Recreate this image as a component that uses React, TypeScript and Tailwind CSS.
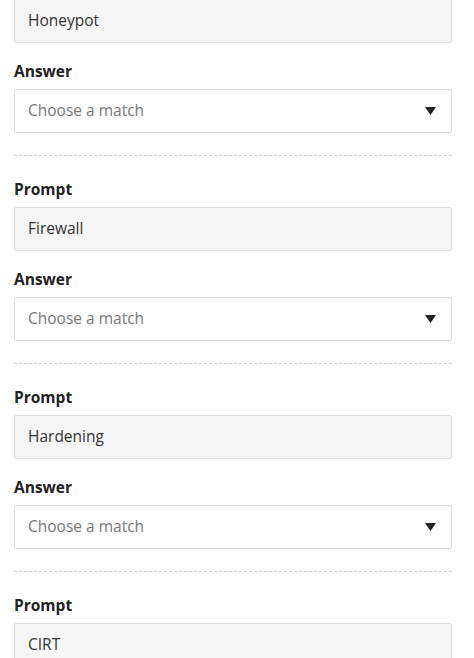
const items = [
  { prompt: "Honeypot", hidePrompt: true },
  { prompt: "Firewall" },
  { prompt: "Hardening" },
  { prompt: "CIRT" },
];

function Caret() {
  return (
    <svg width="11" height="8" viewBox="0 0 11 8" className="shrink-0">
      <path d="M0 0 H11 L5.5 8 Z" fill="#222" />
    </svg>
  );
}

export default function App() {
  return (
    <div
      className="h-[658px] overflow-hidden bg-white pl-[14px] pr-[22px]"
      style={{ fontFamily: '"Open Sans", "Liberation Sans", sans-serif' }}
    >
      {items.map((item, i) => (
        <div
          key={item.prompt}
          className={i === 0 ? "-mt-px pb-[22px]" : "border-t border-dashed border-[#cfcfcf] pt-[23px] pb-[22px]"}
        >
          {!item.hidePrompt && (
            <p className="mb-2 text-[15.5px] font-bold leading-5 text-[#222]">Prompt</p>
          )}
          <div className="flex h-[44px] items-center rounded-[2px] border border-[#dcdcdc] bg-[#f6f6f6] px-[13px] text-[15.5px] text-[#333]">
            {item.prompt}
          </div>
          {i < 3 && (
            <>
              <p className="mt-[18px] mb-2 text-[15.5px] font-bold leading-5 text-[#222]">Answer</p>
              <div className="flex h-[44px] items-center justify-between rounded-[2px] border border-[#dcdcdc] bg-white pl-[13px] pr-[15px] text-[15.5px] text-[#777]">
                <span>Choose a match</span>
                <Caret />
              </div>
            </>
          )}
        </div>
      ))}
    </div>
  );
}
